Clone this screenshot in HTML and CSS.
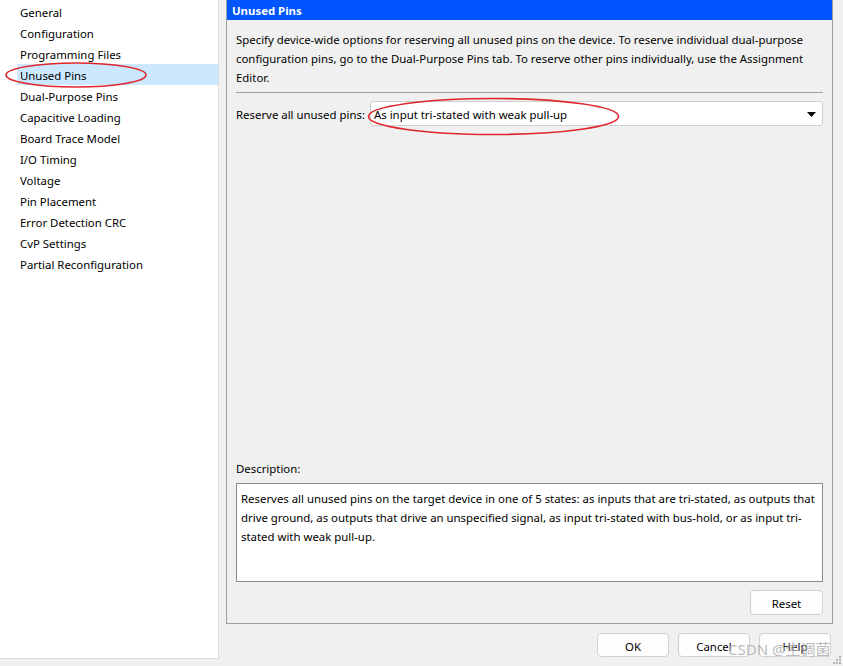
FILE: index.html
```html
<!DOCTYPE html>
<html lang="en">
<head>
    <meta charset="UTF-8">
    <title>Device and Pin Options - Unused Pins</title>
    <link rel="stylesheet" href="styles.css">
</head>
<body>
    <!-- category list -->
    <nav class="sidebar">
        <ul class="page-list">
            <li>General</li>
            <li>Configuration</li>
            <li>Programming Files</li>
            <li class="selected">Unused Pins</li>
            <li>Dual-Purpose Pins</li>
            <li>Capacitive Loading</li>
            <li>Board Trace Model</li>
            <li>I/O Timing</li>
            <li>Voltage</li>
            <li>Pin Placement</li>
            <li>Error Detection CRC</li>
            <li>CvP Settings</li>
            <li>Partial Reconfiguration</li>
        </ul>
    </nav>

    <!-- page content -->
    <div class="main">
        <section class="group">
            <h2 class="group-title">Unused Pins</h2>
            <div class="group-body">
                <p class="intro">Specify device-wide options for reserving all unused pins on the device. To reserve individual dual-purpose configuration pins, go to the Dual-Purpose Pins tab. To reserve other pins individually, use the Assignment Editor.</p>
                <div class="rule"></div>
                <div class="field-row">
                    <label class="field-label">Reserve all unused pins:</label>
                    <div class="combo">
                        <span>As input tri-stated with weak pull-up</span>
                        <svg class="combo-arrow" width="9" height="5" viewBox="0 0 9 5"><path d="M0 0H9L4.5 5Z" fill="#000"/></svg>
                    </div>
                </div>
                <div class="spacer"></div>
                <div class="desc-label">Description:</div>
                <div class="desc-box">Reserves all unused pins on the target device in one of 5 states: as inputs that are tri-stated, as outputs that drive ground, as outputs that drive an unspecified signal, as input tri-stated with bus-hold, or as input tri-stated with weak pull-up.</div>
                <div class="reset-row">
                    <button class="btn btn-reset">Reset</button>
                </div>
            </div>
        </section>

        <div class="dialog-buttons">
            <button class="btn">OK</button>
            <button class="btn">Cancel</button>
            <button class="btn">Help</button>
        </div>
    </div>

    <!-- red annotation marks -->
    <svg class="marks" width="843" height="666" viewBox="0 0 843 666">
        <ellipse cx="76" cy="75" rx="70" ry="12" fill="none" stroke="#e0262b" stroke-width="1.6"/>
        <ellipse cx="493.5" cy="116.5" rx="125" ry="18" fill="none" stroke="#e0262b" stroke-width="1.6"/>
    </svg>

    <div class="watermark">CSDN @生调菌</div>

    <svg class="grip" width="8" height="8" viewBox="0 0 8 8">
        <rect x="6" y="0" width="2" height="2" fill="#b5b5b5"/>
        <rect x="3" y="3" width="2" height="2" fill="#b5b5b5"/>
        <rect x="6" y="3" width="2" height="2" fill="#b5b5b5"/>
        <rect x="0" y="6" width="2" height="2" fill="#b5b5b5"/>
        <rect x="3" y="6" width="2" height="2" fill="#b5b5b5"/>
        <rect x="6" y="6" width="2" height="2" fill="#b5b5b5"/>
    </svg>
</body>
</html>
```

FILE: styles.css
```css
* {
    box-sizing: border-box;
    margin: 0;
    padding: 0;
}

body {
    font-family: "Noto Sans", "Open Sans", sans-serif;
    font-size: 11.4px;
    color: #000;
    background: #f0f0f0;
    display: flex;
    width: 843px;
    height: 666px;
    overflow: hidden;
    position: relative;
}

/* category list */
.sidebar {
    width: 219px;
    height: 659px;
    background: #fff;
    border-right: 1px solid #dcdcdc;
    border-bottom: 1px solid #dcdcdc;
}

.page-list {
    list-style: none;
    padding-top: 1px;
}

.page-list li {
    height: 21px;
    line-height: 23px;
    margin-left: 17px;
    padding-left: 3px;
    white-space: nowrap;
}

.page-list li.selected {
    background: #cce8ff;
}

/* right side */
.main {
    flex: 1;
    display: flex;
    flex-direction: column;
}

.group {
    height: 624px;
    margin-left: 7px;
    margin-right: 10px;
    border: 1px solid #a0a0a0;
    border-top: none;
    display: flex;
    flex-direction: column;
}

.group-title {
    height: 20px;
    line-height: 22px;
    padding-left: 5px;
    background: #0055ff;
    color: #fff;
    font-size: 11.4px;
    font-weight: bold;
}

.group-body {
    flex: 1;
    display: flex;
    flex-direction: column;
    padding: 10px 9px 8px 9px;
}

.intro {
    line-height: 19px;
}

.rule {
    border-top: 1px solid #a0a0a0;
    margin: 5px 0 8px;
}

.field-row {
    display: flex;
    align-items: center;
    gap: 5px;
}

.field-label {
    white-space: nowrap;
    padding-top: 1px;
}

.combo {
    flex: 1;
    height: 25px;
    display: flex;
    align-items: center;
    justify-content: space-between;
    padding: 1px 6px 0 3px;
    background: #fff;
    border: 1px solid #cfcfcf;
    border-radius: 3px;
}

.spacer {
    flex: 1;
}

.desc-label {
    line-height: 19px;
    margin-bottom: 5px;
}

.desc-box {
    height: 99px;
    padding: 5px 4px;
    line-height: 19px;
    background: #fff;
    border: 1px solid #878b92;
}

.reset-row {
    display: flex;
    justify-content: flex-end;
    margin-top: 8px;
}

/* buttons */
.btn {
    width: 72px;
    height: 24px;
    padding-top: 2px;
    font-family: inherit;
    font-size: 11.4px;
    color: #000;
    background: #fdfdfd;
    border: 1px solid #d0d0d0;
    border-radius: 4px;
}

.btn-reset {
    width: 73px;
    height: 25px;
}

.dialog-buttons {
    display: flex;
    justify-content: flex-end;
    gap: 9px;
    margin-top: 9px;
    padding-right: 12px;
}

/* overlays */
.marks {
    position: absolute;
    left: 0;
    top: 0;
    pointer-events: none;
}

.watermark {
    position: absolute;
    left: 728px;
    top: 638px;
    font-family: "Noto Sans", "Noto Sans CJK SC", sans-serif;
    font-size: 15px;
    color: rgba(140, 140, 140, 0.6);
    text-shadow: 0 0 2px rgba(255, 255, 255, 0.8);
    white-space: nowrap;
}

.grip {
    position: absolute;
    right: 2px;
    bottom: 2px;
}
```
